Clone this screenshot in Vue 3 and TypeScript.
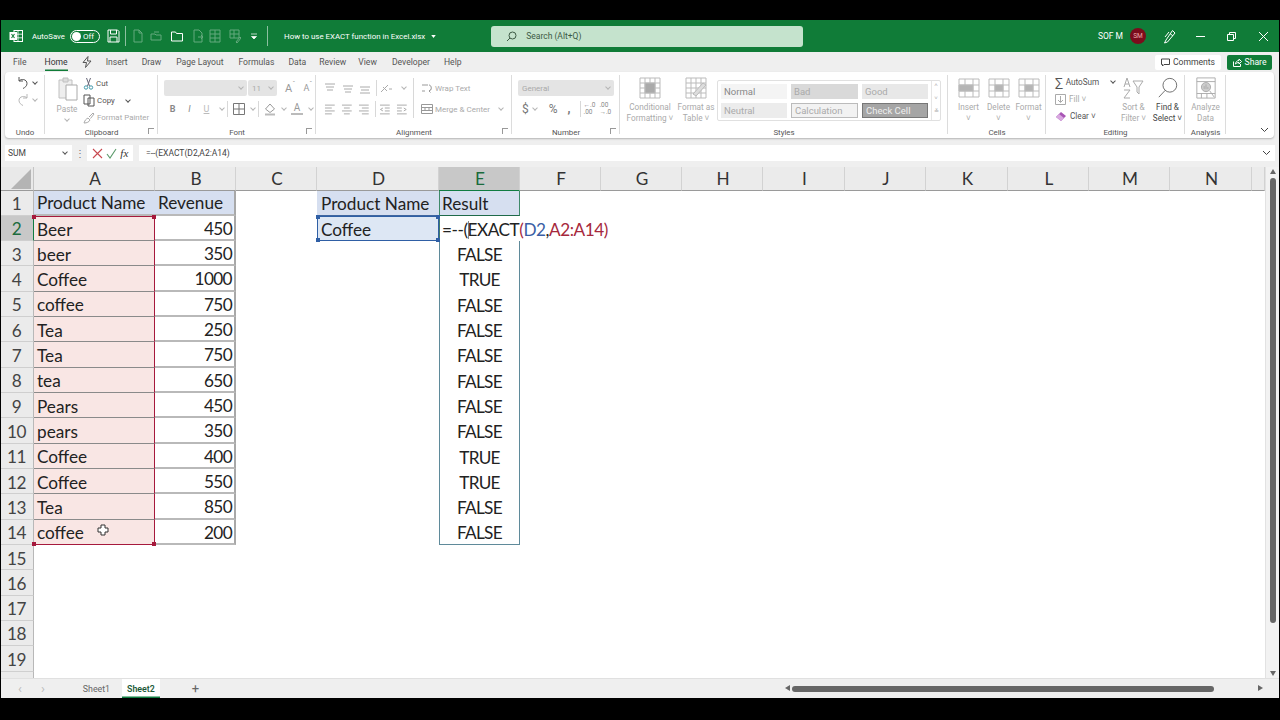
<template>
  <div class="app">
    <div class="letterbox-top"></div>

    <!-- title bar -->
    <div class="titlebar">
      <svg class="xl-logo" width="14" height="14" viewBox="0 0 14 14">
        <rect x="5" y="1.5" width="8.5" height="11" fill="none" stroke="#fff" />
        <path d="M9 1.5v11M5 5.2h8.5M5 8.8h8.5" stroke="#fff" stroke-width=".8" />
        <rect x="0.5" y="3" width="7.5" height="8" fill="#fff" />
        <path d="M2.5 5l3 4M5.5 5l-3 4" stroke="#107c38" stroke-width="1.1" />
      </svg>
      <span class="autosave">AutoSave</span>
      <span class="toggle"><i></i>Off</span>
      <svg class="qa save" width="13" height="14" viewBox="0 0 13 14" fill="none" stroke="#fff">
        <path d="M1 1h9.5L12 2.5V13H1zM3.5 1v4h6V1M3 13V8h7v5" />
      </svg>
      <span class="vsep sep1"></span>
      <svg v-for="(ic, i) in quickIcons" :key="i" class="qa" :style="{ marginLeft: ic.gap + 'px', opacity: ic.on ? 1 : 0.35 }" width="12" height="14" viewBox="0 0 12 14" fill="none" stroke="#fff">
        <path :d="ic.d" />
      </svg>
      <svg class="more" width="8" height="8" viewBox="0 0 8 8"><path d="M1 2h6M1.5 4.5h5l-2.500 2.500z" fill="#fff" stroke="#fff" stroke-width=".7" /></svg>
      <span class="vsep sep2"></span>
      <span class="doc-title">How to use EXACT function in Excel.xlsx</span>
      <svg class="doc-caret" width="5" height="3" viewBox="0 0 6 4"><path d="M0 0h6L3 4z" fill="#fff" /></svg>
      <div class="search">
        <svg width="11" height="11" viewBox="0 0 11 11" fill="none" stroke="#3d5b45"><circle cx="6.500" cy="4.500" r="3.500" /><path d="M4 7l-3 3" /></svg>
        <span>Search (Alt+Q)</span>
      </div>
      <span class="user">SOF M</span>
      <span class="avatar">SM</span>
      <svg class="pen" width="13" height="15" viewBox="0 0 13 15" fill="none" stroke="#fff"><path d="M3 11l-1.500 3 3-1L12 4 9.500 1.500zM7 4.500l3 2.500M2 8l4-5" /></svg>
      <svg class="win w1" width="11" height="11" viewBox="0 0 11 11" stroke="#fff"><path d="M1 5.500h9" /></svg>
      <svg class="win w2" width="11" height="11" viewBox="0 0 11 11" fill="none" stroke="#fff"><path d="M1.500 3.500h6v6h-6zM3.500 3.500v-2h6v6h-2" /></svg>
      <svg class="win w3" width="11" height="11" viewBox="0 0 11 11" stroke="#fff"><path d="M1 1l9 9M10 1l-9 9" /></svg>
    </div>

    <!-- ribbon tabs -->
    <div class="tabs">
      <span v-for="t in tabs" :key="t.name" class="tab" :class="{ active: t.name === 'Home' }" :style="{ marginLeft: t.gap + 'px' }">{{ t.name }}</span>
      <svg class="bolt" width="10" height="12" viewBox="0 0 10 12" fill="none" stroke="#555"><path d="M6 .5L1 6.500h3.500L3.500 11.500 9 5H5.500z" /></svg>
      <div class="tab-actions">
        <span class="comments">
          <svg width="9" height="9" viewBox="0 0 9 9" fill="none" stroke="#444"><path d="M.5 1h8v5.500H3L1.500 8V6.500h-1z" /></svg>Comments
        </span>
        <span class="share">
          <svg width="9" height="9" viewBox="0 0 9 9" fill="none" stroke="#fff"><path d="M.5 3.500v5h7V6M2.500 6c0-2 1.500-3.500 3.500-3.500V1l2.500 2.500L6 6V4.500C4.500 4.500 3.500 5 2.500 6z" /></svg>Share
        </span>
      </div>
    </div>

    <!-- ribbon -->
    <div class="ribbon">
      <section class="grp" style="width: 40px">
        <div class="grp-body undo-col">
          <span class="line">
            <svg width="14" height="14" viewBox="0 0 14 14" fill="none" stroke="#555"><path d="M3 1v4h4M3 5c2-2.500 8-2 8 2.500 0 2.500-2 4-4 5" /></svg><b class="chev tight"></b>
          </span>
          <span class="line off">
            <svg width="14" height="14" viewBox="0 0 14 14" fill="none" stroke="#b8b8b8"><path d="M11 1v4H7M11 5C9 2.500 3 3 3 7.500c0 2.500 2 4 4 5" /></svg><b class="chev tight light"></b>
          </span>
        </div>
        <div class="grp-label">Undo</div>
      </section>

      <section class="grp" style="width: 113px">
        <div class="grp-body clip">
          <div class="paste">
            <svg width="22" height="24" viewBox="0 0 22 24" fill="none" stroke="#c0c0c0">
              <path d="M3 3h13v18H3z" fill="#eee" />
              <path d="M7 1h5v4H7z" fill="#ddd" />
              <path d="M10 8h11v15H10z" fill="#fff" stroke="#aaa" />
            </svg>
            <span class="off-t">Paste</span>
            <b class="chev light"></b>
          </div>
          <div class="clip-list">
            <span class="line">
              <svg width="11" height="13" viewBox="0 0 11 13" fill="none" stroke="#667"><path d="M3.500 1l3 8M7.500 1l-3 8" /><circle cx="3" cy="10.500" r="1.700" stroke="#49a" /><circle cx="8" cy="10.500" r="1.700" stroke="#49a" /></svg>Cut
            </span>
            <span class="line">
              <svg width="12" height="13" viewBox="0 0 12 13" fill="none" stroke="#555"><path d="M1 1h6v9H1zM5 4h6v8H5z" fill="#fff" /></svg>Copy<b class="chev" style="margin-left: 9px"></b>
            </span>
            <span class="line off-t">
              <svg width="12" height="12" viewBox="0 0 12 12" fill="none" stroke="#aaa"><path d="M1 11c1-3 2-4 4-5l2 2c-1 2-3 3-6 3zM6 5l4-4 1 1-3.500 4.500" /></svg>Format Painter
            </span>
          </div>
        </div>
        <div class="grp-label">Clipboard<i class="launcher"></i></div>
      </section>

      <section class="grp" style="width: 158px">
        <div class="grp-body font">
          <div class="row r1">
            <span class="combo c-font"><b class="chev light"></b></span>
            <span class="combo c-size">11<b class="chev light"></b></span>
            <span class="grow-a">A<sup>ˆ</sup></span>
            <span class="grow-a small">A<sup>ˇ</sup></span>
          </div>
          <div class="row r2">
            <b class="fmt">B</b><i class="fmt">I</i><u class="fmt u">U</u><b class="chev light"></b>
            <span class="mini-sep"></span>
            <svg width="12" height="12" viewBox="0 0 12 12" fill="none" stroke="#777"><path d="M.5.5h11v11H.5zM6 .5v11M.5 6h11" /></svg><b class="chev light"></b>
            <span class="mini-sep"></span>
            <svg width="12" height="13" viewBox="0 0 12 13" fill="none" stroke="#999"><path d="M6 1L1.500 6 6 9.500 10.500 6z" /><path d="M1 11.500h10" stroke="#bbb" stroke-width="2" /></svg><b class="chev light"></b>
            <span class="color-a">A</span><b class="chev light"></b>
          </div>
        </div>
        <div class="grp-label">Font<i class="launcher"></i></div>
      </section>

      <section class="grp" style="width: 196px">
        <div class="grp-body align">
          <div class="al-left">
            <div class="row">
              <svg v-for="d in alignTop" :key="d" class="al" width="12" height="12" viewBox="0 0 12 12" stroke="#aaa"><path :d="d" /></svg>
              <span class="mini-sep"></span>
              <svg class="al" width="13" height="12" viewBox="0 0 13 12" fill="none" stroke="#aaa"><path d="M1 10l7-7M3 5l4 4M9 7h3" /></svg><b class="chev light"></b>
            </div>
            <div class="row">
              <svg v-for="d in alignBottom" :key="d" class="al" width="12" height="12" viewBox="0 0 12 12" stroke="#aaa"><path :d="d" /></svg>
              <span class="mini-sep"></span>
              <svg v-for="d in indents" :key="d" class="al" width="12" height="12" viewBox="0 0 12 12" fill="none" stroke="#aaa"><path :d="d" /></svg>
            </div>
          </div>
          <span class="al-sep"></span>
          <div class="al-right">
            <span class="off-t wrap"><svg width="12" height="12" viewBox="0 0 12 12" fill="none" stroke="#999"><path d="M1 3h6M1 9h3M8 3c3 0 3 6 0 6M8 9l1.500-1.500M8 9l1.500 1.500" /></svg>Wrap Text</span>
            <span class="off-t wrap"><svg width="12" height="12" viewBox="0 0 12 12" fill="none" stroke="#999"><path d="M.5 1.500h11v9H.5zM.5 4.500h11M.5 7.500h11M4 4.500v3M8 4.500v3" /></svg>Merge &amp; Center<b class="chev light" style="margin-left: 7px"></b></span>
          </div>
        </div>
        <div class="grp-label">Alignment<i class="launcher"></i></div>
      </section>

      <section class="grp" style="width: 108px">
        <div class="grp-body number">
          <span class="combo c-num">General<b class="chev light"></b></span>
          <div class="row num-row">
            <span class="sym">$</span><b class="chev light"></b>
            <span class="sym pct">%</span>
            <span class="sym comma">,</span>
            <span class="mini-sep"></span>
            <span class="dec">←.0<br />.00</span>
            <span class="dec">.00<br />→.0</span>
          </div>
        </div>
        <div class="grp-label">Number<i class="launcher"></i></div>
      </section>

      <section class="grp" style="width: 328px">
        <div class="grp-body styles">
          <div class="big" style="width: 50px">
            <svg width="22" height="22" viewBox="0 0 22 22" fill="none" stroke="#bbb"><path d="M1 1h20v20H1zM1 6h20M1 11h20M1 16h20M6 1v20M11 1v20M16 1v20" /><path d="M6 6h10v10H6z" fill="#aaa" /></svg>
            <span class="off-t">Conditional<br />Formatting ˅</span>
          </div>
          <div class="big" style="width: 42px">
            <svg width="22" height="22" viewBox="0 0 22 22" fill="none" stroke="#bbb"><path d="M1 1h20v20H1zM1 6h20M1 11h20M1 16h20M6 1v20M11 1v20M16 1v20" /><path d="M8 17l10-11 3 2-10 11z" fill="#ddd" /></svg>
            <span class="off-t">Format as<br />Table ˅</span>
          </div>
          <div class="gallery">
            <div class="cell-styles">
              <span v-for="s in cellStyles" :key="s.name" class="style-chip" :class="s.cls">{{ s.name }}</span>
            </div>
            <div class="gal-scroll"><i>˄</i><i>˅</i><i>≚</i></div>
          </div>
        </div>
        <div class="grp-label">Styles</div>
      </section>

      <section class="grp" style="width: 98px">
        <div class="grp-body cells">
          <div v-for="c in cellOps" :key="c.name" class="big">
            <svg width="22" height="22" viewBox="0 0 22 22" fill="none" stroke="#bbb"><path d="M1 2h20v18H1zM1 8h20M1 14h20M7 2v18M15 2v18" /><path :d="c.d" fill="#b5b5b5" /></svg>
            <span class="off-t">{{ c.name }}<br />˅</span>
          </div>
        </div>
        <div class="grp-label">Cells</div>
      </section>

      <section class="grp" style="width: 139px">
        <div class="grp-body editing">
          <div class="edit-list">
            <span class="line"><span class="sigma">∑</span>AutoSum<b class="chev" style="margin-left: 9px"></b></span>
            <span class="line off-t"><svg width="11" height="11" viewBox="0 0 11 11" fill="none" stroke="#aaa"><path d="M.5.5h10v10H.5zM5.500 2v6M3 6l2.500 2.500L8 6" /></svg>Fill ˅</span>
            <span class="line"><svg width="12" height="11" viewBox="0 0 12 11"><path d="M1 6l5-5 5 4-5 5z" fill="#a855b5" /><path d="M1 6l3-3 5 4-3 3z" fill="#d8a8e0" /></svg>Clear ˅</span>
          </div>
          <div class="big narrow">
            <svg width="24" height="22" viewBox="0 0 24 22" fill="none" stroke="#aaa"><path d="M2 10l3-9 3 9M3 7h4M2 13h6l-6 8h6M11 4h10l-4 6v7l-2-2v-5z" /></svg>
            <span class="off-t">Sort &amp;<br />Filter ˅</span>
          </div>
          <div class="big narrow active-t">
            <svg width="22" height="22" viewBox="0 0 24 24" fill="none" stroke="#666"><circle cx="14" cy="9" r="7.500" /><path d="M9 14.500L2 22" /></svg>
            <span>Find &amp;<br />Select ˅</span>
          </div>
        </div>
        <div class="grp-label">Editing</div>
      </section>

      <section class="grp" style="width: 41px">
        <div class="grp-body analysis">
          <div class="big">
            <svg width="22" height="22" viewBox="0 0 22 24" fill="none" stroke="#aaa"><path d="M1 1h20v22H1zM1 5h20M1 18h20M6 18v5M12 18v5" /><circle cx="11" cy="11" r="5" fill="#ccc" /><path d="M9 13V10M11 13V8M13 13v-2" /><path d="M15 15l5 7" /></svg>
            <span class="off-t">Analyze<br />Data</span>
          </div>
        </div>
        <div class="grp-label">Analysis</div>
      </section>

      <svg class="collapse" width="9" height="6" viewBox="0 0 9 6" fill="none" stroke="#444"><path d="M1 1l3.500 3.500L8 1" /></svg>
    </div>

    <!-- formula bar -->
    <div class="formula-bar">
      <div class="namebox">SUM<b class="chev"></b></div>
      <span class="dots">⋮</span>
      <div class="fx-box">
        <svg width="11" height="11" viewBox="0 0 11 11" fill="none" stroke="#c8484f" stroke-width="1.100"><path d="M1 1l9 9M10 1l-9 9" /></svg>
        <svg width="11" height="11" viewBox="0 0 11 11" fill="none" stroke="#5a9a6a" stroke-width="1.100"><path d="M1 6l3 4 6-9" /></svg>
        <i class="fx">fx</i>
      </div>
      <div class="finput">=--(EXACT(D2,A2:A14)
        <svg width="9" height="6" viewBox="0 0 9 6" fill="none" stroke="#444"><path d="M1 1l3.500 3.500L8 1" /></svg>
      </div>
    </div>

    <!-- sheet -->
    <div class="sheet-wrap">
      <div class="sheet">
        <template v-for="cell in cells" :key="cell.id">
          <div class="c" :class="cell.cls">
            <template v-if="cell.formula">
              <span class="edit-text">=--(<i class="caret"></i>EXACT<em class="red">(</em><em class="blue">D2</em>,<em class="red">A2:A14)</em></span>
            </template>
            <template v-else>{{ cell.text }}</template>
            <i v-for="h in cell.handles" :key="h" class="handle" :class="h"></i>
            <svg v-if="cell.cursor" class="cursor" width="12" height="12" viewBox="0 0 12 12"><path d="M4 1h4v3h3v4H8v3H4V8H1V4h3z" fill="#fff" stroke="#333" /></svg>
          </div>
        </template>
      </div>
      <div class="vscroll">
        <i class="arrow up"></i>
        <span class="vthumb"></span>
        <i class="arrow down"></i>
      </div>
    </div>

    <!-- sheet tabs -->
    <div class="sheetbar">
      <span class="nav">‹</span>
      <span class="nav n2">›</span>
      <span class="s-tab s1">Sheet1</span>
      <span class="s-tab s2">Sheet2</span>
      <span class="add">+</span>
      <div class="hscroll">
        <i class="arrow left"></i>
        <span class="hthumb"></span>
        <i class="arrow right"></i>
      </div>
    </div>

    <div class="letterbox-bottom"></div>
  </div>
</template>

<script setup lang="ts">
interface Cell {
  id: string
  text: string
  cls: string[]
  formula?: boolean
  cursor?: boolean
  handles?: string[]
}

const tabs = [
  { name: 'File', gap: 12 },
  { name: 'Home', gap: 18 },
  { name: 'Insert', gap: 38 },
  { name: 'Draw', gap: 14 },
  { name: 'Page Layout', gap: 15 },
  { name: 'Formulas', gap: 15 },
  { name: 'Data', gap: 14 },
  { name: 'Review', gap: 13 },
  { name: 'View', gap: 12 },
  { name: 'Developer', gap: 15 },
  { name: 'Help', gap: 14 },
]

const quickIcons = [
  { d: 'M2 1h5l3 3v9H2zM7 1v3h3', gap: 6, on: false },
  { d: 'M1 5h4l1 1h5v5H1zM4 3h5', gap: 6, on: false },
  { d: 'M.5 3h4l1 1.500h6V12H.5z', gap: 9, on: true },
  { d: 'M2 1h5l3 3v9H2zM6 8h5M9 6l2 2-2 2', gap: 9, on: false },
  { d: 'M1 1h10v12H1zM1 5h10M1 9h10M6 1v12', gap: 5, on: false },
  { d: 'M1 1h9v8H1zM1 5h9M5 1v8M7 13l4-5 1 1-4 5z', gap: 8, on: false },
]

const alignTop = ['M1 2h10M2 5h8M3 8h6', 'M1 4h10M2 7h8M3 10h6', 'M1 5h10M2 8h8M1 11h10']
const alignBottom = ['M1 2h10M1 5h7M1 8h10M1 11h7', 'M1 2h10M3 5h6M1 8h10M3 11h6', 'M1 2h10M4 5h7M1 8h10M4 11h7']
const indents = ['M1 2h10M6 5h5M6 8h5M1 11h10M4 5L1.500 6.500 4 8', 'M1 2h10M1 5h5M1 8h5M1 11h10M8 5l2.500 1.500L8 8']

const cellStyles = [
  { name: 'Normal', cls: 's-normal' },
  { name: 'Bad', cls: 's-bad' },
  { name: 'Good', cls: 's-good' },
  { name: 'Neutral', cls: 's-neutral' },
  { name: 'Calculation', cls: 's-calc' },
  { name: 'Check Cell', cls: 's-check' },
]

const cellOps = [
  { name: 'Insert', d: 'M1 8h14v6H1z' },
  { name: 'Delete', d: 'M7 8h8v6H7z' },
  { name: 'Format', d: 'M7 8h8v6H7z' },
]

const colNames = 'ABCDEFGHIJKLMN'.split('')

const products = ['Beer', 'beer', 'Coffee', 'coffee', 'Tea', 'Tea', 'tea', 'Pears', 'pears', 'Coffee', 'Coffee', 'Tea', 'coffee']
const revenue = [450, 350, 1000, 750, 250, 750, 650, 450, 350, 400, 550, 850, 200]
const results = ['FALSE', 'TRUE', 'FALSE', 'FALSE', 'FALSE', 'FALSE', 'FALSE', 'FALSE', 'TRUE', 'TRUE', 'FALSE', 'FALSE']

const cells: Cell[] = []

// header row, the last empty cell fills up to the scrollbar
cells.push({ id: 'corner', text: '', cls: ['corner'] })
colNames.forEach((n) => {
  cells.push({ id: 'h' + n, text: n, cls: ['col-head', n === 'E' ? 'head-sel' : ''] })
})
cells.push({ id: 'hfill', text: '', cls: ['col-head'] })

for (let r = 1; r <= 20; r++) {
  cells.push({
    id: 'r' + r,
    text: r <= 19 ? String(r) : '',
    cls: ['row-head', r === 2 ? 'head-sel' : '', r === 20 ? 'row-last' : ''],
  })
  colNames.forEach((n) => {
    const cell: Cell = { id: n + r, text: '', cls: [] }
    if (r === 1) {
      if (n === 'A') { cell.text = 'Product Name'; cell.cls = ['hdr', 'tbl'] }
      if (n === 'B') { cell.text = 'Revenue'; cell.cls = ['hdr', 'tbl', 'tbl-r'] }
      if (n === 'D') { cell.text = 'Product Name'; cell.cls = ['hdr', 'hdr-d'] }
      if (n === 'E') { cell.text = 'Result'; cell.cls = ['hdr', 'hdr-e'] }
    } else if (r <= 14) {
      if (n === 'A') {
        cell.text = products[r - 2]
        cell.cls = ['ref-a', r === 2 ? 'ref-top' : '', r === 14 ? 'ref-bottom' : '']
        if (r === 2) cell.handles = ['tl', 'tr']
        if (r === 14) { cell.handles = ['bl', 'br']; cell.cursor = true }
      }
      if (n === 'B') {
        cell.text = String(revenue[r - 2])
        cell.cls = ['num', 'tbl', 'tbl-r']
      }
      if (r === 2 && n === 'D') {
        cell.text = 'Coffee'
        cell.cls = ['ref-d']
        cell.handles = ['tl', 'tr', 'bl', 'br']
      }
      if (n === 'E') {
        if (r === 2) {
          cell.formula = true
          cell.cls = ['editing-cell']
        } else {
          cell.text = results[r - 3]
          cell.cls = ['result', r === 14 ? 'result-last' : '']
        }
      }
    }
    cells.push(cell)
  })
  cells.push({ id: 'fill' + r, text: '', cls: [] })
}
</script>

<style>
html,
body {
  margin: 0;
  background: #000;
}
</style>

<style scoped>
.app {
  width: 1280px;
  height: 720px;
  box-sizing: border-box;
  border-left: 1px solid #000;
  border-right: 1px solid #000;
  display: flex;
  flex-direction: column;
  overflow: hidden;
  background: #efefef;
  font-family: Roboto, 'Liberation Sans', sans-serif;
  color: #444;
}

.letterbox-top {
  height: 20px;
  background: #000;
  flex: none;
}

.letterbox-bottom {
  height: 22px;
  background: #000;
  flex: none;
}

.titlebar {
  height: 32px;
  flex: none;
  background: #107c38;
  display: flex;
  align-items: center;
  color: #fff;
  font-size: 8.5px;
}

.xl-logo {
  margin-left: 8px;
}

.autosave {
  width: 33px;
  margin-left: 9px;
  font-size: 7.800px;
  white-space: nowrap;
}

.toggle {
  margin-left: 5px;
  width: 30px;
  height: 13px;
  box-sizing: border-box;
  border: 1px solid #fff;
  border-radius: 7px;
  display: flex;
  align-items: center;
  gap: 2px;
  font-size: 8px;
}

.toggle i {
  width: 9px;
  height: 9px;
  margin-left: 1px;
  border-radius: 50%;
  background: #fff;
}

.save {
  margin-left: 7px;
}

.vsep {
  width: 1px;
  height: 20px;
  background: #8cc0a0;
}

.sep1 {
  margin-left: 5px;
}

.more {
  margin-left: 9px;
}

.sep2 {
  margin-left: 9px;
}

.doc-title {
  margin-left: 16px;
  font-size: 7.900px;
  white-space: nowrap;
}

.doc-caret {
  margin-left: 6px;
}

.search {
  width: 312px;
  height: 21px;
  margin-left: 55px;
  box-sizing: border-box;
  padding-left: 15px;
  display: flex;
  align-items: center;
  gap: 9px;
  background: #c5e3cd;
  border-radius: 3px;
  color: #3d5b45;
  font-size: 8.5px;
}

.user {
  margin-left: auto;
  white-space: nowrap;
}

.avatar {
  margin-left: 7px;
  width: 16px;
  height: 16px;
  border-radius: 50%;
  background: #7b0c1c;
  color: #eaa;
  font-size: 6.500px;
  display: flex;
  align-items: center;
  justify-content: center;
}

.pen {
  margin-left: 17px;
}

.win {
  flex: none;
}

.w1 {
  margin-left: 19px;
}

.w2 {
  margin-left: 20px;
}

.w3 {
  margin-left: 21px;
  margin-right: 10px;
}

.tabs {
  height: 20px;
  flex: none;
  display: flex;
  align-items: center;
  position: relative;
  font-size: 8.6px;
  color: #555;
}

.tab {
  line-height: 20px;
  white-space: nowrap;
}

.tab.active {
  color: #333;
  box-shadow: inset 0 -2px 0 -0.5px #107c38;
  height: 17px;
  line-height: 17px;
  align-self: flex-start;
  margin-top: 2px;
}

.bolt {
  position: absolute;
  left: 81px;
  top: 4px;
}

.tab-actions {
  margin-left: auto;
  margin-right: 7px;
  display: flex;
  gap: 6px;
}

.comments,
.share {
  height: 15px;
  display: flex;
  align-items: center;
  justify-content: center;
  gap: 3px;
  border-radius: 2px;
  font-size: 8.6px;
}

.comments {
  width: 66px;
  background: #fff;
  color: #444;
}

.share {
  width: 45px;
  background: #107c38;
  color: #fff;
}

.ribbon {
  height: 66px;
  flex: none;
  margin: 0 5px 0 4px;
  background: #fff;
  border-radius: 4px;
  box-shadow: 0 1px 2px rgba(0, 0, 0, 0.25);
  display: flex;
  position: relative;
  font-size: 8.200px;
  color: #555;
}

.grp {
  box-sizing: border-box;
  flex: none;
  display: flex;
  flex-direction: column;
  position: relative;
}

.grp::after {
  content: '';
  position: absolute;
  right: 0;
  top: 3px;
  bottom: 4px;
  width: 1px;
  background: #dcdcdc;
}

.grp-body {
  height: 52px;
  box-sizing: border-box;
}

.grp-label {
  flex: 1;
  display: flex;
  align-items: center;
  justify-content: center;
  position: relative;
  padding-top: 2px;
  font-size: 7.900px;
  color: #555;
}

.launcher {
  position: absolute;
  right: 4px;
  top: 4px;
  width: 5px;
  height: 5px;
  border-left: 1px solid #999;
  border-top: 1px solid #999;
}

.chev {
  display: inline-block;
  flex: none;
  width: 3px;
  height: 3px;
  margin-left: 4px;
  margin-bottom: 2px;
  border-right: 1px solid #555;
  border-bottom: 1px solid #555;
  transform: rotate(45deg);
}

.chev.tight {
  margin-left: 1px;
}

.chev.light {
  border-color: #b5b5b5;
}

.off-t {
  color: #aaa;
}

.line {
  display: flex;
  align-items: center;
  gap: 2px;
  white-space: nowrap;
}

.row {
  display: flex;
  align-items: center;
}

.undo-col {
  display: flex;
  flex-direction: column;
  gap: 3px;
  padding: 4px 0 0 11px;
}

.clip {
  display: flex;
  padding-top: 5px;
}

.paste {
  width: 28px;
  margin-left: 8px;
  display: flex;
  flex-direction: column;
  align-items: center;
  gap: 3px;
}

.paste .chev {
  margin: 0;
}

.clip-list {
  margin-left: 2px;
  display: flex;
  flex-direction: column;
  gap: 4px;
  font-size: 7.900px;
}

.clip-list .line {
  height: 13px;
}

.font {
  padding: 8px 0 0 6px;
}

.combo {
  height: 16px;
  box-sizing: border-box;
  display: flex;
  align-items: center;
  justify-content: flex-end;
  padding: 0 4px;
  background: #e4e4e4;
  border-radius: 2px;
  color: #aaa;
  font-size: 8px;
}

.c-font {
  width: 83px;
}

.c-size {
  width: 29px;
  margin-left: 1px;
  justify-content: space-between;
}

.grow-a {
  margin-left: 8px;
  font-size: 11px;
  color: #999;
  line-height: 1;
}

.grow-a sup {
  font-size: 7px;
  line-height: 0;
}

.grow-a.small {
  font-size: 9px;
}

.r2 {
  margin-top: 6px;
  padding-left: 1px;
  height: 14px;
  gap: 2px;
}

.fmt {
  width: 15px;
  text-align: center;
  color: #888;
  font-size: 9px;
}

.fmt.u {
  color: #bbb;
}

.mini-sep {
  width: 1px;
  height: 16px;
  margin: 0 3px 0 1px;
  background: #d8d8d8;
}

.color-a {
  margin-left: 3px;
  width: 12px;
  text-align: center;
  border-bottom: 2px solid #bbb;
  line-height: 10px;
  font-size: 10px;
  color: #999;
}

.align {
  padding: 6px 0 0 8px;
  display: flex;
}

.al-left {
  width: 89px;
  display: flex;
  flex-direction: column;
  gap: 1px;
}

.al-left .row {
  height: 20px;
}

.al {
  margin-right: 5.500px;
}

.al-left .mini-sep {
  margin: 0 3px 0 -1px;
}

.al-sep {
  width: 1px;
  height: 40px;
  background: #d8d8d8;
}

.al-right {
  padding-left: 7px;
  display: flex;
  flex-direction: column;
  gap: 1px;
}

.wrap {
  height: 20px;
  display: flex;
  align-items: center;
  gap: 2px;
  white-space: nowrap;
  font-size: 8px;
}

.number {
  padding: 8px 0 0 6px;
}

.c-num {
  width: 96px;
  justify-content: space-between;
}

.num-row {
  margin-top: 2px;
  height: 22px;
  padding-left: 4px;
  color: #777;
}

.sym {
  font-size: 12px;
}

.pct {
  margin-left: 12px;
}

.comma {
  margin-left: 10px;
  margin-right: 8px;
  font-weight: 700;
}

.dec {
  font-size: 6.500px;
  line-height: 7px;
  color: #888;
  margin-right: 4px;
  white-space: nowrap;
}

.styles {
  display: flex;
  padding: 5px 0 0 5px;
}

.big {
  display: flex;
  flex-direction: column;
  align-items: center;
  gap: 3px;
  text-align: center;
  line-height: 10.5px;
  white-space: nowrap;
}

.gallery {
  margin-top: 3px;
  width: 224px;
  height: 41px;
  box-sizing: border-box;
  border: 1px solid #e0e0e0;
  border-radius: 2px;
  display: flex;
}

.cell-styles {
  flex: 1;
  display: grid;
  grid-template-columns: 66px 67px 66px;
  grid-template-rows: 15px 15px;
  gap: 4px 4px;
  padding: 3px 0 0 3px;
}

.style-chip {
  display: flex;
  align-items: center;
  padding-left: 3px;
  box-sizing: border-box;
  font-size: 9.500px;
  color: #888;
  background: #f4f4f4;
}

.s-bad {
  background: #d9d9d9;
  color: #aaa;
}

.s-good {
  background: #e8e8e8;
  color: #aaa;
}

.s-neutral {
  background: #ececec;
  color: #aaa;
}

.s-calc {
  background: #f2f2f2;
  border: 1px solid #bbb;
  color: #aaa;
}

.s-check {
  background: #a5a5a5;
  border: 1px solid #777;
  color: #eee;
}

.gal-scroll {
  width: 8px;
  display: flex;
  flex-direction: column;
  border-left: 1px solid #e6e6e6;
  font-size: 6px;
  color: #aaa;
}

.gal-scroll i {
  flex: 1;
  font-style: normal;
  text-align: center;
}

.cells {
  display: flex;
  gap: 5px;
  padding: 5px 0 0 8px;
}

.cells .big {
  width: 25px;
}

.editing {
  display: flex;
  padding: 3px 0 0 9px;
}

.edit-list {
  width: 75px;
  display: flex;
  flex-direction: column;
  gap: 3px;
}

.edit-list .line {
  height: 14px;
  gap: 3px;
}

.sigma {
  font-size: 13px;
  color: #555;
}

.narrow {
  width: 35px;
  flex: none;
  padding-top: 2px;
}

.active-t {
  color: #444;
  margin-left: -1px;
}

.analysis {
  padding: 5px 0 0 0;
}

.analysis .big {
  width: 41px;
}

.collapse {
  position: absolute;
  right: 5px;
  bottom: 5px;
}

.formula-bar {
  height: 16px;
  flex: none;
  margin-top: 7px;
  display: flex;
  align-items: center;
  font-size: 8.500px;
  color: #444;
}

.namebox {
  width: 67px;
  height: 16px;
  margin-left: 4px;
  box-sizing: border-box;
  padding: 0 5px 0 3px;
  display: flex;
  align-items: center;
  justify-content: space-between;
  background: #fff;
}

.dots {
  width: 15px;
  text-align: center;
  font-size: 10px;
  color: #777;
}

.fx-box {
  width: 46px;
  height: 16px;
  box-sizing: border-box;
  padding: 0 3px;
  display: flex;
  align-items: center;
  justify-content: space-around;
  background: #fff;
}

.fx {
  font-family: 'Liberation Serif', serif;
  font-size: 11px;
  color: #333;
}

.finput {
  width: 1136px;
  height: 16px;
  margin-left: 6px;
  box-sizing: border-box;
  padding: 0 4px 0 7px;
  display: flex;
  align-items: center;
  justify-content: space-between;
  background: #fff;
}

.sheet-wrap {
  flex: 1;
  min-height: 0;
  margin-top: 6px;
  display: flex;
  background: #fff;
}

.sheet {
  width: 1264px;
  display: grid;
  grid-template-columns: 33px 121px 81px 81px 122px 81px 81px 81px 81px 82px 81px 82px 81px 81px 82px 13px;
  grid-template-rows: 23.500px repeat(19, 25.330px) 1fr;
  font-family: Lato, 'Liberation Sans', sans-serif;
  font-size: 17.200px;
  color: #222;
  overflow: hidden;
  background: #fff;
}

.c {
  position: relative;
  box-sizing: border-box;
  display: flex;
  align-items: center;
  padding: 1.500px 3px 0 3px;
  white-space: nowrap;
  min-width: 0;
}

.corner {
  background: #e9e9e9;
  border-bottom: 1px solid #9a9a9a;
  border-right: 1px solid #c4c4c4;
}

.corner::after {
  content: '';
  position: absolute;
  right: 2px;
  bottom: 1px;
  width: 0;
  height: 0;
  border-left: 20px solid transparent;
  border-bottom: 20px solid #b4b4b4;
}

.col-head {
  justify-content: center;
  padding: 1px 1px 0 3px;
  background: #ebebeb;
  border-right: 1px solid #d2d2d2;
  border-bottom: 1px solid #9a9a9a;
  color: #333;
}

.row-head {
  justify-content: center;
  padding: 1.500px 3px 0 2px;
  letter-spacing: -0.5px;
  background: #ebebeb;
  border-right: 1px solid #b8b8b8;
  border-bottom: 1px solid #cfcfcf;
  color: #444;
}

.head-sel {
  background: #c8c8c8;
  color: #1a6b3c;
}

.row-head.head-sel {
  border-right: 1px solid #107c41;
}

.col-head.head-sel {
  border-bottom: 1px solid #107c41;
}

.row-last {
  border-bottom: none;
}

.hdr {
  background: #d6dff0;
}

.tbl {
  border-bottom: 2px solid #b9b9b9;
}

.tbl-r {
  border-right: 2px solid #a8a8a8;
}

.hdr-d {
  padding-left: 4px;
  border-bottom: 1px solid #3f66a0;
}

.hdr-e {
  padding-left: 2px;
  border: 1px solid #3f8a6a;
  border-top: none;
  border-bottom: 1px solid #1f6a4a;
}

.num {
  justify-content: flex-end;
  padding-right: 2px;
  letter-spacing: -0.6px;
}

.ref-a {
  background: #f9e6e4;
  border-right: 1.500px solid #a6193c;
  border-bottom: 1px solid #8a8a8a;
}

.ref-top {
  border-top: 1px solid #a6193c;
}

.ref-bottom {
  border-bottom: 1.500px solid #a6193c;
}

.ref-d {
  padding-left: 3px;
  background: #dde7f4;
  border: 1px solid #2f5fa5;
}

.editing-cell {
  z-index: 2;
  padding-left: 2px;
  background: #fff;
  border-left: 1px solid #3f7a6a;
}

.edit-text {
  background: #fff;
  position: relative;
  z-index: 2;
  letter-spacing: -0.45px;
}

.edit-text em {
  font-style: normal;
}

.red {
  color: #a6283c;
}

.blue {
  color: #3a5fa5;
}

.caret {
  display: inline-block;
  width: 1px;
  height: 18px;
  margin: 0 -1px -3px 0;
  background: #888;
}

.result {
  justify-content: center;
  letter-spacing: -0.7px;
  border-left: 1px solid #5f8a9a;
  border-right: 1px solid #5f8a9a;
}

.result-last {
  border-bottom: 1px solid #5f8a9a;
}

.handle {
  position: absolute;
  width: 4px;
  height: 4px;
  z-index: 3;
  background: #a6193c;
}

.ref-d .handle {
  background: #2f5fa5;
}

.tl {
  left: -2px;
  top: -2px;
}

.tr {
  right: -2px;
  top: -2px;
}

.bl {
  left: -2px;
  bottom: -2px;
}

.br {
  right: -2px;
  bottom: -2px;
}

.cursor {
  position: absolute;
  left: 63px;
  top: 4px;
}

.vscroll {
  flex: 1;
  position: relative;
  background: #f2f2f2;
  border-left: 1px solid #e2e2e2;
}

.vthumb {
  position: absolute;
  left: 4px;
  top: 11px;
  bottom: 55px;
  width: 6px;
  background: #666;
  border-radius: 3px;
}

.arrow {
  position: absolute;
  width: 0;
  height: 0;
}

.arrow.up {
  left: 4px;
  top: 2px;
  border: 3px solid transparent;
  border-bottom: 5px solid #666;
  border-top: none;
}

.arrow.down {
  left: 4px;
  bottom: 2px;
  border: 3px solid transparent;
  border-top: 5px solid #666;
  border-bottom: none;
}

.sheetbar {
  height: 20px;
  flex: none;
  display: flex;
  align-items: center;
  position: relative;
  border-top: 1px solid #e0e0e0;
  box-sizing: border-box;
  font-size: 8.800px;
  color: #666;
}

.nav {
  margin-left: 17px;
  font-size: 13px;
  color: #bbb;
}

.nav.n2 {
  margin-left: 19px;
}

.s-tab {
  white-space: nowrap;
}

.s1 {
  margin-left: 38px;
}

.s2 {
  margin-left: 12px;
  height: 19px;
  padding: 0 5px;
  display: flex;
  align-items: center;
  background: #fff;
  color: #1c5a38;
  font-weight: 600;
  box-shadow: inset 0 -3px 0 -1.500px #107c41;
}

.add {
  margin-left: 32px;
  font-size: 13px;
  color: #666;
}

.hscroll {
  position: absolute;
  left: 784px;
  top: 0;
  right: 0;
  bottom: 0;
}

.hthumb {
  position: absolute;
  left: 7px;
  top: 7px;
  width: 422px;
  height: 6px;
  border-radius: 3px;
  background: #666;
}

.arrow.left {
  left: 0;
  top: 6px;
  border: 3px solid transparent;
  border-right: 5px solid #666;
  border-left: none;
}

.arrow.right {
  left: 473px;
  top: 6px;
  border: 3px solid transparent;
  border-left: 5px solid #666;
  border-right: none;
}
</style>
